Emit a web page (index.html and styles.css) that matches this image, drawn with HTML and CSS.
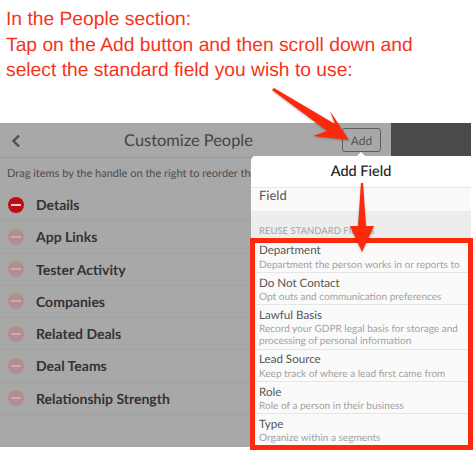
FILE: index.html
```html
<!DOCTYPE html>
<html lang="en">
<head>
<meta charset="utf-8">
<title>Customize People</title>
<link rel="stylesheet" href="styles.css">
</head>
<body>
<div class="page">
  <div class="intro">
    <p>In the People section:</p>
    <p>Tap on the Add button and then scroll down and</p>
    <p>select the standard field you wish to use:</p>
  </div>
  <div class="app">
    <div class="screen">
      <div class="topbar">
        <svg class="back" width="10" height="14" viewBox="0 0 10 14"><path d="M8 1.5 2.5 7 8 12.5" fill="none" stroke="#4f4f4f" stroke-width="2.4"/></svg>
        <div class="title">Customize People</div>
        <div class="add">Add</div>
      </div>
      <div class="hint">Drag items by the handle on the right to reorder them</div>
      <ul class="rows">
        <li class="row"><span class="minus on"></span>Details</li>
        <li class="row"><span class="minus"></span>App Links</li>
        <li class="row"><span class="minus"></span>Tester Activity</li>
        <li class="row"><span class="minus"></span>Companies</li>
        <li class="row"><span class="minus"></span>Related Deals</li>
        <li class="row"><span class="minus"></span>Deal Teams</li>
        <li class="row"><span class="minus"></span>Relationship Strength</li>
      </ul>
    </div>
    <div class="side"></div>
    <div class="popover">
      <div class="pop-title">Add Field</div>
      <div class="pop-field">Field</div>
      <div class="pop-section">REUSE STANDARD FIELDS</div>
      <ul class="fields">
        <li class="field"><b>Department</b><span>Department the person works in or reports to</span></li>
        <li class="field"><b>Do Not Contact</b><span>Opt outs and communication preferences</span></li>
        <li class="field"><b>Lawful Basis</b><span>Record your GDPR legal basis for storage and processing of personal information</span></li>
        <li class="field"><b>Lead Source</b><span>Keep track of where a lead first came from</span></li>
        <li class="field"><b>Role</b><span>Role of a person in their business</span></li>
        <li class="field"><b>Type</b><span>Organize within a segments</span></li>
      </ul>
    </div>
  </div>
  <div class="redbox"></div>
  <svg class="arrows" width="474" height="451" viewBox="0 0 474 451">
    <path d="M272 90 274 88 335 124 330 111 349 140 313 136 327 131Z" fill="#fb2a0c"/>
    <path d="M361 183 363 183 366 226 374 226 362 252 350 226 358 226Z" fill="#fb2a0c"/>
  </svg>
</div>
</body>
</html>
```
FILE: styles.css
```css
* { box-sizing: border-box; }
html, body { margin: 0; padding: 0; background: #fff; }
.page { position: relative; width: 474px; height: 451px; overflow: hidden; font-family: Lato, "Open Sans", sans-serif; text-rendering: geometricPrecision; }
.intro { height: 123px; padding: 7px 0 0 6px; color: #f5341c; font: 19.25px/25.5px "Liberation Sans", Arial, sans-serif; }
.intro p { margin: 0; white-space: nowrap; }
.app { position: relative; display: flex; width: 471px; height: 324px; align-items: flex-start; }
.screen { width: 391px; height: 324px; background: #a9a8a8; }
.side { width: 80px; height: 33px; background: #4a4a4a; }
.topbar { position: relative; display: flex; align-items: center; justify-content: center; height: 35px; border-bottom: 1px solid #999; padding-right: 14px; }
.back { position: absolute; left: 11px; top: 11px; }
.title { font-size: 16.4px; color: #444; }
.add { position: absolute; left: 342px; top: 5px; width: 39px; height: 24px; border: 1px solid #5e5e5e; border-radius: 3px; font-size: 12px; line-height: 23px; text-align: center; color: #555; }
.hint { height: 31px; padding: 9px 0 0 7px; font-size: 11px; color: #4d4d4d; white-space: nowrap; overflow: hidden; }
.rows { list-style: none; margin: 0; padding: 0; }
.row { display: flex; align-items: center; height: 32.25px; padding-left: 8px; gap: 12px; border-bottom: 1px solid #a1a0a0; font-size: 14px; font-weight: 700; color: #333; }
.minus { position: relative; flex: none; width: 16px; height: 16px; border-radius: 50%; background: #b58d90; }
.minus::after { content: ""; position: absolute; left: 3px; right: 3px; top: 7px; height: 2px; background: #c9adae; }
.minus.on { background: #c00a14; }
.minus.on::after { background: #f0d5d5; }
.popover { position: absolute; left: 251px; top: 33px; width: 220px; height: 291px; background: #fafafa; border-radius: 5px 5px 0 0; }
.popover::before { content: ""; position: absolute; left: 105px; top: -4px; border: 5px solid transparent; border-top: 0; border-bottom-color: #fff; }
.pop-title { height: 32px; background: #fff; border-bottom: 1px solid #e6e6e6; border-radius: 5px 5px 0 0; font-size: 14.5px; font-weight: 500; line-height: 32px; text-align: center; color: #222; }
.pop-field { height: 23px; padding-left: 8px; font-size: 13px; line-height: 14px; color: #555; }
.pop-section { height: 29.7px; padding: 14px 0 0 8px; background: #eeeded; font-size: 9.5px; line-height: 13px; color: #a3a3a3; white-space: nowrap; }
.fields { list-style: none; margin: 0; padding: 0; }
.field { padding: 3.7px 4px 1.3px 8px; border-bottom: 1px solid #e6e6e6; }
.field:last-child { border-bottom: 0; }
.field b { display: block; font-weight: 400; font-size: 11.6px; line-height: 14px; color: #555; }
.field span { display: block; margin-top: .3px; font-size: 10.05px; line-height: 12px; color: #a2a2a2; }
.redbox { position: absolute; left: 250px; top: 238px; width: 223px; height: 212px; border: 5px solid #fb2a0c; }
.arrows { position: absolute; left: 0; top: 0; filter: drop-shadow(0 1px 1px rgba(0,0,0,.25)); }
```
